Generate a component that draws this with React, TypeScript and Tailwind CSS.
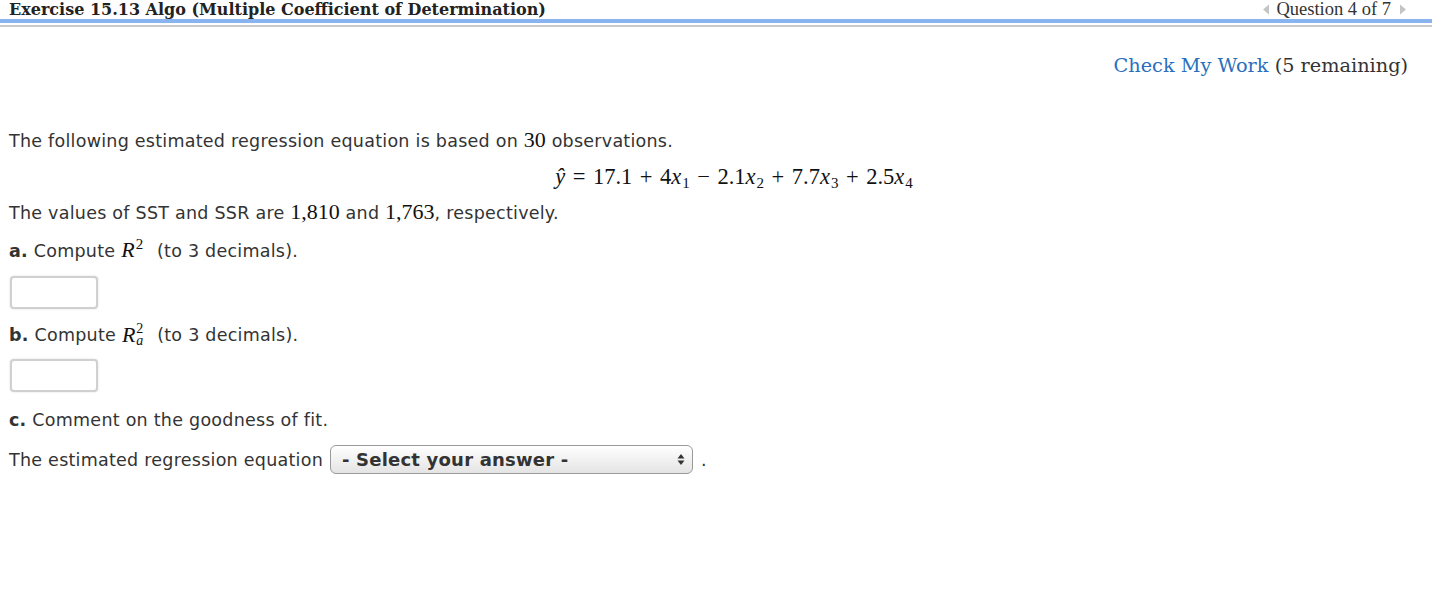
import React from "react";

const sans = { fontFamily: '"DejaVu Sans", Verdana, sans-serif' };
const serif = { fontFamily: '"Liberation Serif", "DejaVu Serif", serif' };
const dserif = { fontFamily: '"DejaVu Serif", "Liberation Serif", serif' };

function M({ children }: { children: React.ReactNode }) {
  return (
    <span className="text-[22px] text-[#111] tracking-normal" style={serif}>
      {children}
    </span>
  );
}

function V({ children }: { children: React.ReactNode }) {
  return <span className="italic">{children}</span>;
}

function Sub({ children }: { children: React.ReactNode }) {
  return <span className="text-[15px] not-italic relative top-[4px] ml-[1px]">{children}</span>;
}

function Op({ children }: { children: React.ReactNode }) {
  return <span className="mx-[7.5px]">{children}</span>;
}

function Box() {
  return (
    <div className="w-[88px] h-[33px] rounded-[4px] border-2 border-[#d0d0d0] bg-white shadow-[0_0_2px_rgba(0,0,0,0.15)]" />
  );
}

export default function App() {
  return (
    <div className="w-[1432px] h-[594px] bg-white text-[#333] relative overflow-hidden">
      {/* header */}
      <div className="flex items-end justify-between h-[19px] px-[9px]">
        <div className="text-[16px] font-bold leading-[19px] text-[#222]" style={dserif}>
          Exercise 15.13 Algo (Multiple Coefficient of Determination)
        </div>
        <div className="flex items-center gap-[6px] text-[18.5px] leading-[19px] text-[#333] pr-[16px]" style={serif}>
          <svg width="8" height="11" viewBox="0 0 8 11"><path d="M7 0.5 L1 5.5 L7 10.5 Z" fill="#c4c4c4" /></svg>
          <span>Question 4 of 7</span>
          <svg width="8" height="11" viewBox="0 0 8 11" className="ml-[2px]"><path d="M1 0.5 L7 5.5 L1 10.5 Z" fill="#c4c4c4" /></svg>
        </div>
      </div>
      <div className="h-[4px] bg-[#8ab4ef]" />
      <div className="h-[2px] bg-white" />
      <div className="h-[2px] bg-[#c9c9c9]" />

      <div className="flex justify-end pr-[24px] mt-[25px]">
        <div className="text-[19.3px] leading-[28px]" style={dserif}>
          <span className="text-[#2a6fbe]">Check My Work</span>{" "}
          <span className="text-[#333]">(5 remaining)</span>
        </div>
      </div>

      <div className="px-[9px] mt-[48px] text-[17.5px] tracking-[0.25px] text-[#333]" style={sans}>
        <div className="leading-[24px]">
          The following estimated regression equation is based on <M>30</M> observations.
        </div>
        <div className="flex justify-center mt-[12px] leading-[24px] pl-[36px]">
          <span className="text-[22.5px] text-[#111] tracking-normal" style={serif}>
            <V>ŷ</V><Op>=</Op>17.1<Op>+</Op>4<V>x</V><Sub>1</Sub><Op>−</Op>2.1<V>x</V><Sub>2</Sub><Op>+</Op>7.7<V>x</V><Sub>3</Sub><Op>+</Op>2.5<V>x</V><Sub>4</Sub>
          </span>
        </div>
        <div className="leading-[24px] mt-[9px]">
          The values of SST and SSR are <M>1,810</M> and <M>1,763</M>, respectively.
        </div>
        <div className="leading-[24px] mt-[13px]">
          <span className="font-bold">a.</span> Compute{" "}
          <span className="text-[22px] text-[#111] tracking-normal mr-[8px]" style={serif}>
            <V>R</V><span className="text-[15px] relative -top-[8px] ml-[1px]">2</span>
          </span>{" "}
          (to 3 decimals).
        </div>
        <div className="mt-[12px] ml-[1px]">
          <Box />
        </div>
        <div className="leading-[24px] mt-[14px]">
          <span className="font-bold">b.</span> Compute{" "}
          <span className="text-[22px] text-[#111] tracking-normal inline-flex items-start align-top mr-[8px]" style={serif}>
            <V>R</V>
            <span className="inline-flex flex-col text-[14px] leading-[12px] ml-[1px]">
              <span>2</span>
              <span className="italic">a</span>
            </span>
          </span>{" "}
          (to 3 decimals).
        </div>
        <div className="mt-[12px] ml-[1px]">
          <Box />
        </div>
        <div className="leading-[24px] mt-[16px]">
          <span className="font-bold">c.</span> Comment on the goodness of fit.
        </div>
        <div className="flex items-center mt-[13px] leading-[24px]">
          <span>The estimated regression equation</span>
          <div className="ml-[7px] w-[363px] h-[29px] rounded-[6px] border border-[#9a9a9a] bg-gradient-to-b from-white to-[#e4e4e4] flex items-center justify-between pl-[11px] pr-[7px] shadow-[inset_0_1px_0_#fff]">
            <span className="font-bold text-[18px] tracking-[0.2px] text-[#333]">- Select your answer -</span>
            <svg width="8" height="13" viewBox="0 0 8 13">
              <path d="M4 1 L7.5 5.5 L0.5 5.5 Z" fill="#333" />
              <path d="M4 12 L7.5 7.5 L0.5 7.5 Z" fill="#333" />
            </svg>
          </div>
          <span className="ml-[8px]">.</span>
        </div>
      </div>
    </div>
  );
}
